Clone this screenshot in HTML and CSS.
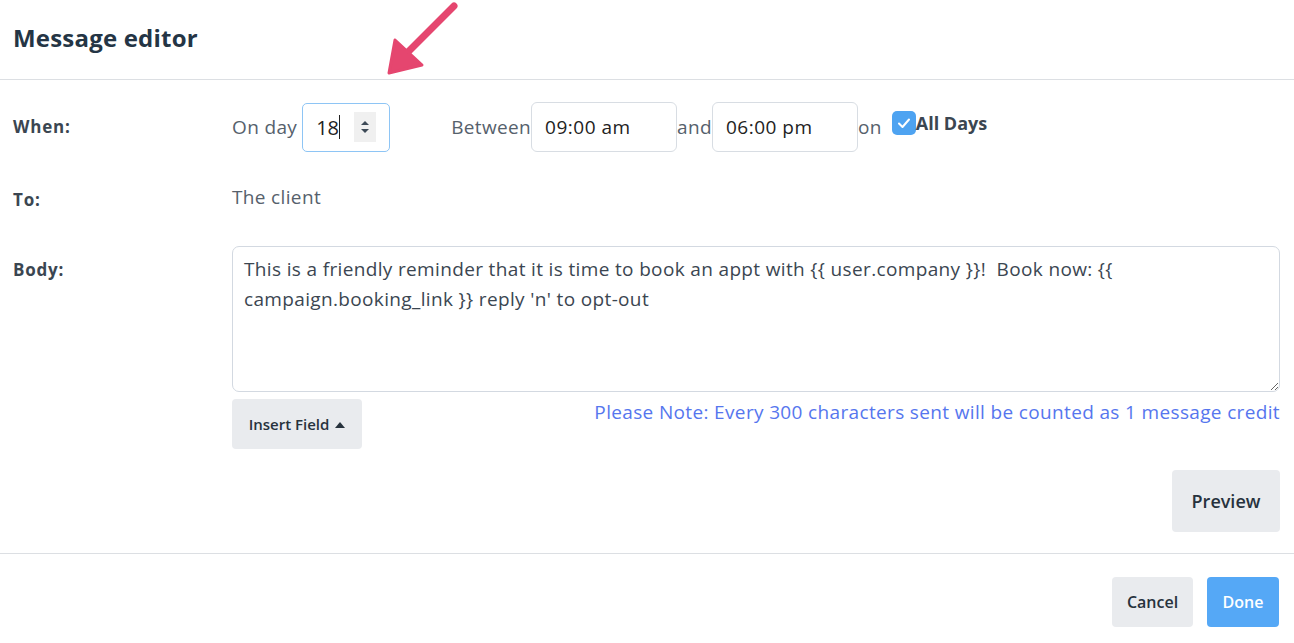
FILE: index.html
```html
<!DOCTYPE html>
<html lang="en">
<head>
    <meta charset="UTF-8">
    <meta name="viewport" content="width=device-width, initial-scale=1.0">
    <title>Message editor</title>
    <link rel="stylesheet" href="styles.css">
</head>
<body>
    <div class="modal">
        <header class="modal-header">
            <h1>Message editor</h1>
        </header>

        <div class="modal-body">
            <div class="row row-when">
                <label class="label">When:</label>
                <div class="field inline">
                    <span class="muted">On day</span>
                    <div class="day-input">
                        <span class="day-value">18<span class="caret"></span></span>
                        <span class="spinner">
                            <svg width="10" height="16" viewBox="0 0 10 16"><path d="M1 6 L5 2 L9 6 Z" fill="#3d4a57"/><path d="M1 10 L5 14 L9 10 Z" fill="#3d4a57"/></svg>
                        </span>
                    </div>
                    <span class="muted between">Between</span>
                    <input type="text" class="time-input" value="09:00 am">
                    <span class="muted">and</span>
                    <input type="text" class="time-input" value="06:00 pm">
                    <span class="muted on">on</span>
                    <span class="checkbox">
                        <svg width="14" height="12" viewBox="0 0 14 12"><path d="M2 6.5 L5.5 10 L12 2.5" fill="none" stroke="#fff" stroke-width="2" stroke-linecap="round" stroke-linejoin="round"/></svg>
                    </span>
                    <span class="check-label">All Days</span>
                </div>
            </div>

            <div class="row row-to">
                <label class="label">To:</label>
                <div class="field muted">The client</div>
            </div>

            <div class="row row-body">
                <label class="label">Body:</label>
                <div class="field">
                    <textarea class="body-text">This is a friendly reminder that it is time to book an appt with {{ user.company }}!  Book now: {{ campaign.booking_link }} reply 'n' to opt-out</textarea>
                    <div class="body-tools">
                        <button class="btn btn-light btn-insert">Insert Field <span class="tri"></span></button>
                        <span class="note">Please Note: Every 300 characters sent will be counted as 1 message credit</span>
                    </div>
                    <div class="preview-wrap">
                        <button class="btn btn-light btn-preview">Preview</button>
                    </div>
                </div>
            </div>
        </div>

        <footer class="modal-footer">
            <button class="btn btn-light">Cancel</button>
            <button class="btn btn-primary">Done</button>
        </footer>

        <svg class="arrow" width="90" height="90" viewBox="0 0 90 90">
            <path d="M72 6 L22 56" stroke="#e5466f" stroke-width="7" stroke-linecap="round" fill="none"/>
            <path d="M7 73 L13 40 L40 65 Z" fill="#e5466f" stroke="#e5466f" stroke-width="3" stroke-linejoin="round"/>
        </svg>
    </div>
</body>
</html>
```

FILE: styles.css
```css
body {
    margin: 0;
    background: #fff;
    font-family: "Open Sans", sans-serif;
    color: #3b4651;
}
.modal {
    position: relative;
    width: 1294px;
    height: 643px;
    overflow: hidden;
}
.modal-header {
    height: 79px;
    border-bottom: 1px solid #dcdfe3;
    padding: 0 13px;
    display: flex;
    align-items: center;
}
.modal-header h1 {
    margin: 0 0 4px;
    font-size: 24px;
    font-weight: 700;
    letter-spacing: 0.2px;
    color: #243545;
}
.modal-body {
    padding: 22px 14px 0 13px;
    height: 474px;
    border-bottom: 1px solid #dcdfe3;
    box-sizing: border-box;
}
.row {
    display: grid;
    grid-template-columns: 219px 1fr;
}
.label {
    font-size: 17px;
    font-weight: 700;
    letter-spacing: 0.8px;
    color: #3b4651;
}
.row-when {
    height: 50px;
    align-items: center;
}
.row-when .label {
    margin-bottom: 2px;
}
.inline {
    display: flex;
    align-items: center;
}
.muted {
    font-size: 19px;
    letter-spacing: 0.35px;
    color: #56616c;
}
.day-input {
    width: 88px;
    height: 49px;
    box-sizing: border-box;
    border: 1.5px solid #8ec5f5;
    border-radius: 5px;
    margin-left: 5px;
    display: flex;
    align-items: center;
    justify-content: space-between;
    padding: 0 13px 0 13px;
}
.day-value {
    font-size: 20px;
    color: #222;
    display: flex;
    align-items: center;
}
.caret {
    display: inline-block;
    width: 1px;
    height: 24px;
    background: #222;
}
.spinner {
    width: 22px;
    height: 30px;
    background: #f0f0f0;
    display: flex;
    align-items: center;
    justify-content: center;
}
.between {
    margin-left: 61px;
}
.time-input {
    width: 146px;
    height: 50px;
    box-sizing: border-box;
    border: 1.5px solid #d8dde3;
    border-radius: 6px;
    padding: 0 13px;
    font-family: inherit;
    font-size: 19px;
    letter-spacing: 0.5px;
    color: #222;
    outline: none;
}
.on {
    margin-left: 0;
}
.checkbox {
    width: 24px;
    height: 24px;
    border-radius: 5px;
    background: #4ea3f1;
    margin-left: 10px;
    margin-top: -8px;
    display: flex;
    align-items: center;
    justify-content: center;
}
.check-label {
    font-size: 18px;
    font-weight: 700;
    color: #3b4651;
    margin-top: -8px;
}
.row-to {
    height: 94px;
    align-items: center;
}
.row-to .field {
    margin-bottom: 5px;
}
.row-body {
    align-items: start;
}
.row-body .label {
    margin-top: 12px;
}
.body-text {
    display: block;
    width: 100%;
    height: 146px;
    box-sizing: border-box;
    border: 1.5px solid #d3d9e1;
    border-radius: 7px;
    padding: 7px 11px;
    font-family: inherit;
    font-size: 19px;
    letter-spacing: 0.35px;
    line-height: 30px;
    color: #3b4651;
    resize: vertical;
    outline: none;
}
.body-tools {
    display: flex;
    justify-content: space-between;
    align-items: flex-start;
    margin-top: 7px;
}
.btn {
    border: none;
    border-radius: 4px;
    font-family: inherit;
    font-weight: 600;
    cursor: pointer;
}
.btn-light {
    background: #e9ebee;
    color: #27323d;
}
.btn-insert {
    width: 130px;
    height: 50px;
    font-size: 15px;
}
.tri {
    display: inline-block;
    width: 0;
    height: 0;
    border-left: 5px solid transparent;
    border-right: 5px solid transparent;
    border-bottom: 6px solid #27323d;
    margin-left: 2px;
    vertical-align: 2px;
}
.note {
    font-size: 19px;
    letter-spacing: 0.35px;
    color: #5676ee;
    margin-top: 0;
}
.preview-wrap {
    display: flex;
    justify-content: flex-end;
    margin-top: 21px;
}
.btn-preview {
    width: 108px;
    height: 62px;
    font-size: 18px;
}
.modal-footer {
    display: flex;
    justify-content: flex-end;
    gap: 14px;
    padding: 23px 15px 0 0;
}
.modal-footer .btn {
    height: 50px;
    font-size: 16px;
}
.modal-footer .btn-light {
    width: 81px;
}
.btn-primary {
    width: 72px;
    background: #55a8f6;
    color: #fff;
}
.arrow {
    position: absolute;
    left: 382px;
    top: 0;
}
```
